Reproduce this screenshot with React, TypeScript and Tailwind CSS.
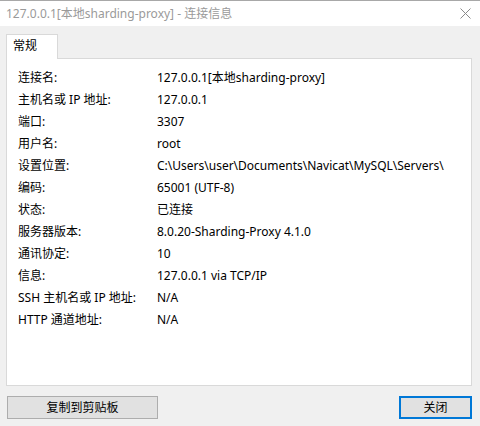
import React from "react";

const rows: [string, string][] = [
  ["连接名:", "127.0.0.1[本地sharding-proxy]"],
  ["主机名或 IP 地址:", "127.0.0.1"],
  ["端口:", "3307"],
  ["用户名:", "root"],
  ["设置位置:", "C:\\Users\\user\\Documents\\Navicat\\MySQL\\Servers\\"],
  ["编码:", "65001 (UTF-8)"],
  ["状态:", "已连接"],
  ["服务器版本:", "8.0.20-Sharding-Proxy 4.1.0"],
  ["通讯协定:", "10"],
  ["信息:", "127.0.0.1 via TCP/IP"],
  ["SSH 主机名或 IP 地址:", "N/A"],
  ["HTTP 通道地址:", "N/A"],
];

const font = { fontFamily: '"Noto Sans", "Noto Sans CJK SC", sans-serif' };

export default function App() {
  return (
    <div
      className="w-[480px] h-[426px] bg-[#f0f0f0] border-t border-[#a8a8a8] flex flex-col text-[12px] text-black overflow-hidden"
      style={font}
    >
      <div className="h-[25px] bg-white flex items-center justify-between pl-[6px] pr-[10px] shrink-0">
        <span className="text-[#9a9a9a] text-[12px] leading-none">127.0.0.1[本地sharding-proxy] - 连接信息</span>
        <svg width="11" height="11" viewBox="0 0 11 11" className="mr-[-1px]">
          <path d="M0.5 0.5 L10.5 10.5 M10.5 0.5 L0.5 10.5" stroke="#8a8a8a" strokeWidth="1" />
        </svg>
      </div>
      <div className="flex-1 flex flex-col px-[6px] pt-[8px]">
        <div className="flex">
          <div className="w-[52px] h-[25px] bg-white border border-b-0 border-[#d9d9d9] mb-[-1px] relative z-10 flex items-start pt-[3px] pl-[6px]">
            <span className="leading-[16px]">常规</span>
          </div>
        </div>
        <div className="w-[466px] h-[328px] bg-white border border-[#d9d9d9] pt-[8px] pl-[11px] pr-[21px]">
          {rows.map(([k, v]) => (
            <div key={k} className="h-[22px] flex items-center">
              <div className="w-[139px] shrink-0 whitespace-nowrap">{k}</div>
              <div className="flex-1 whitespace-nowrap overflow-hidden">{v}</div>
            </div>
          ))}
        </div>
        <div className="flex justify-between mt-[10px] pl-[1px] pr-[2px]">
          <button className="w-[151px] h-[23px] bg-[#e1e1e1] border border-[#adadad] flex items-center justify-center text-[12px]" style={font}>
            复制到剪贴板
          </button>
          <button className="w-[73px] h-[23px] bg-[#e1e1e1] border-2 border-[#0078d7] flex items-center justify-center text-[12px]" style={font}>
            关闭
          </button>
        </div>
      </div>
    </div>
  );
}
